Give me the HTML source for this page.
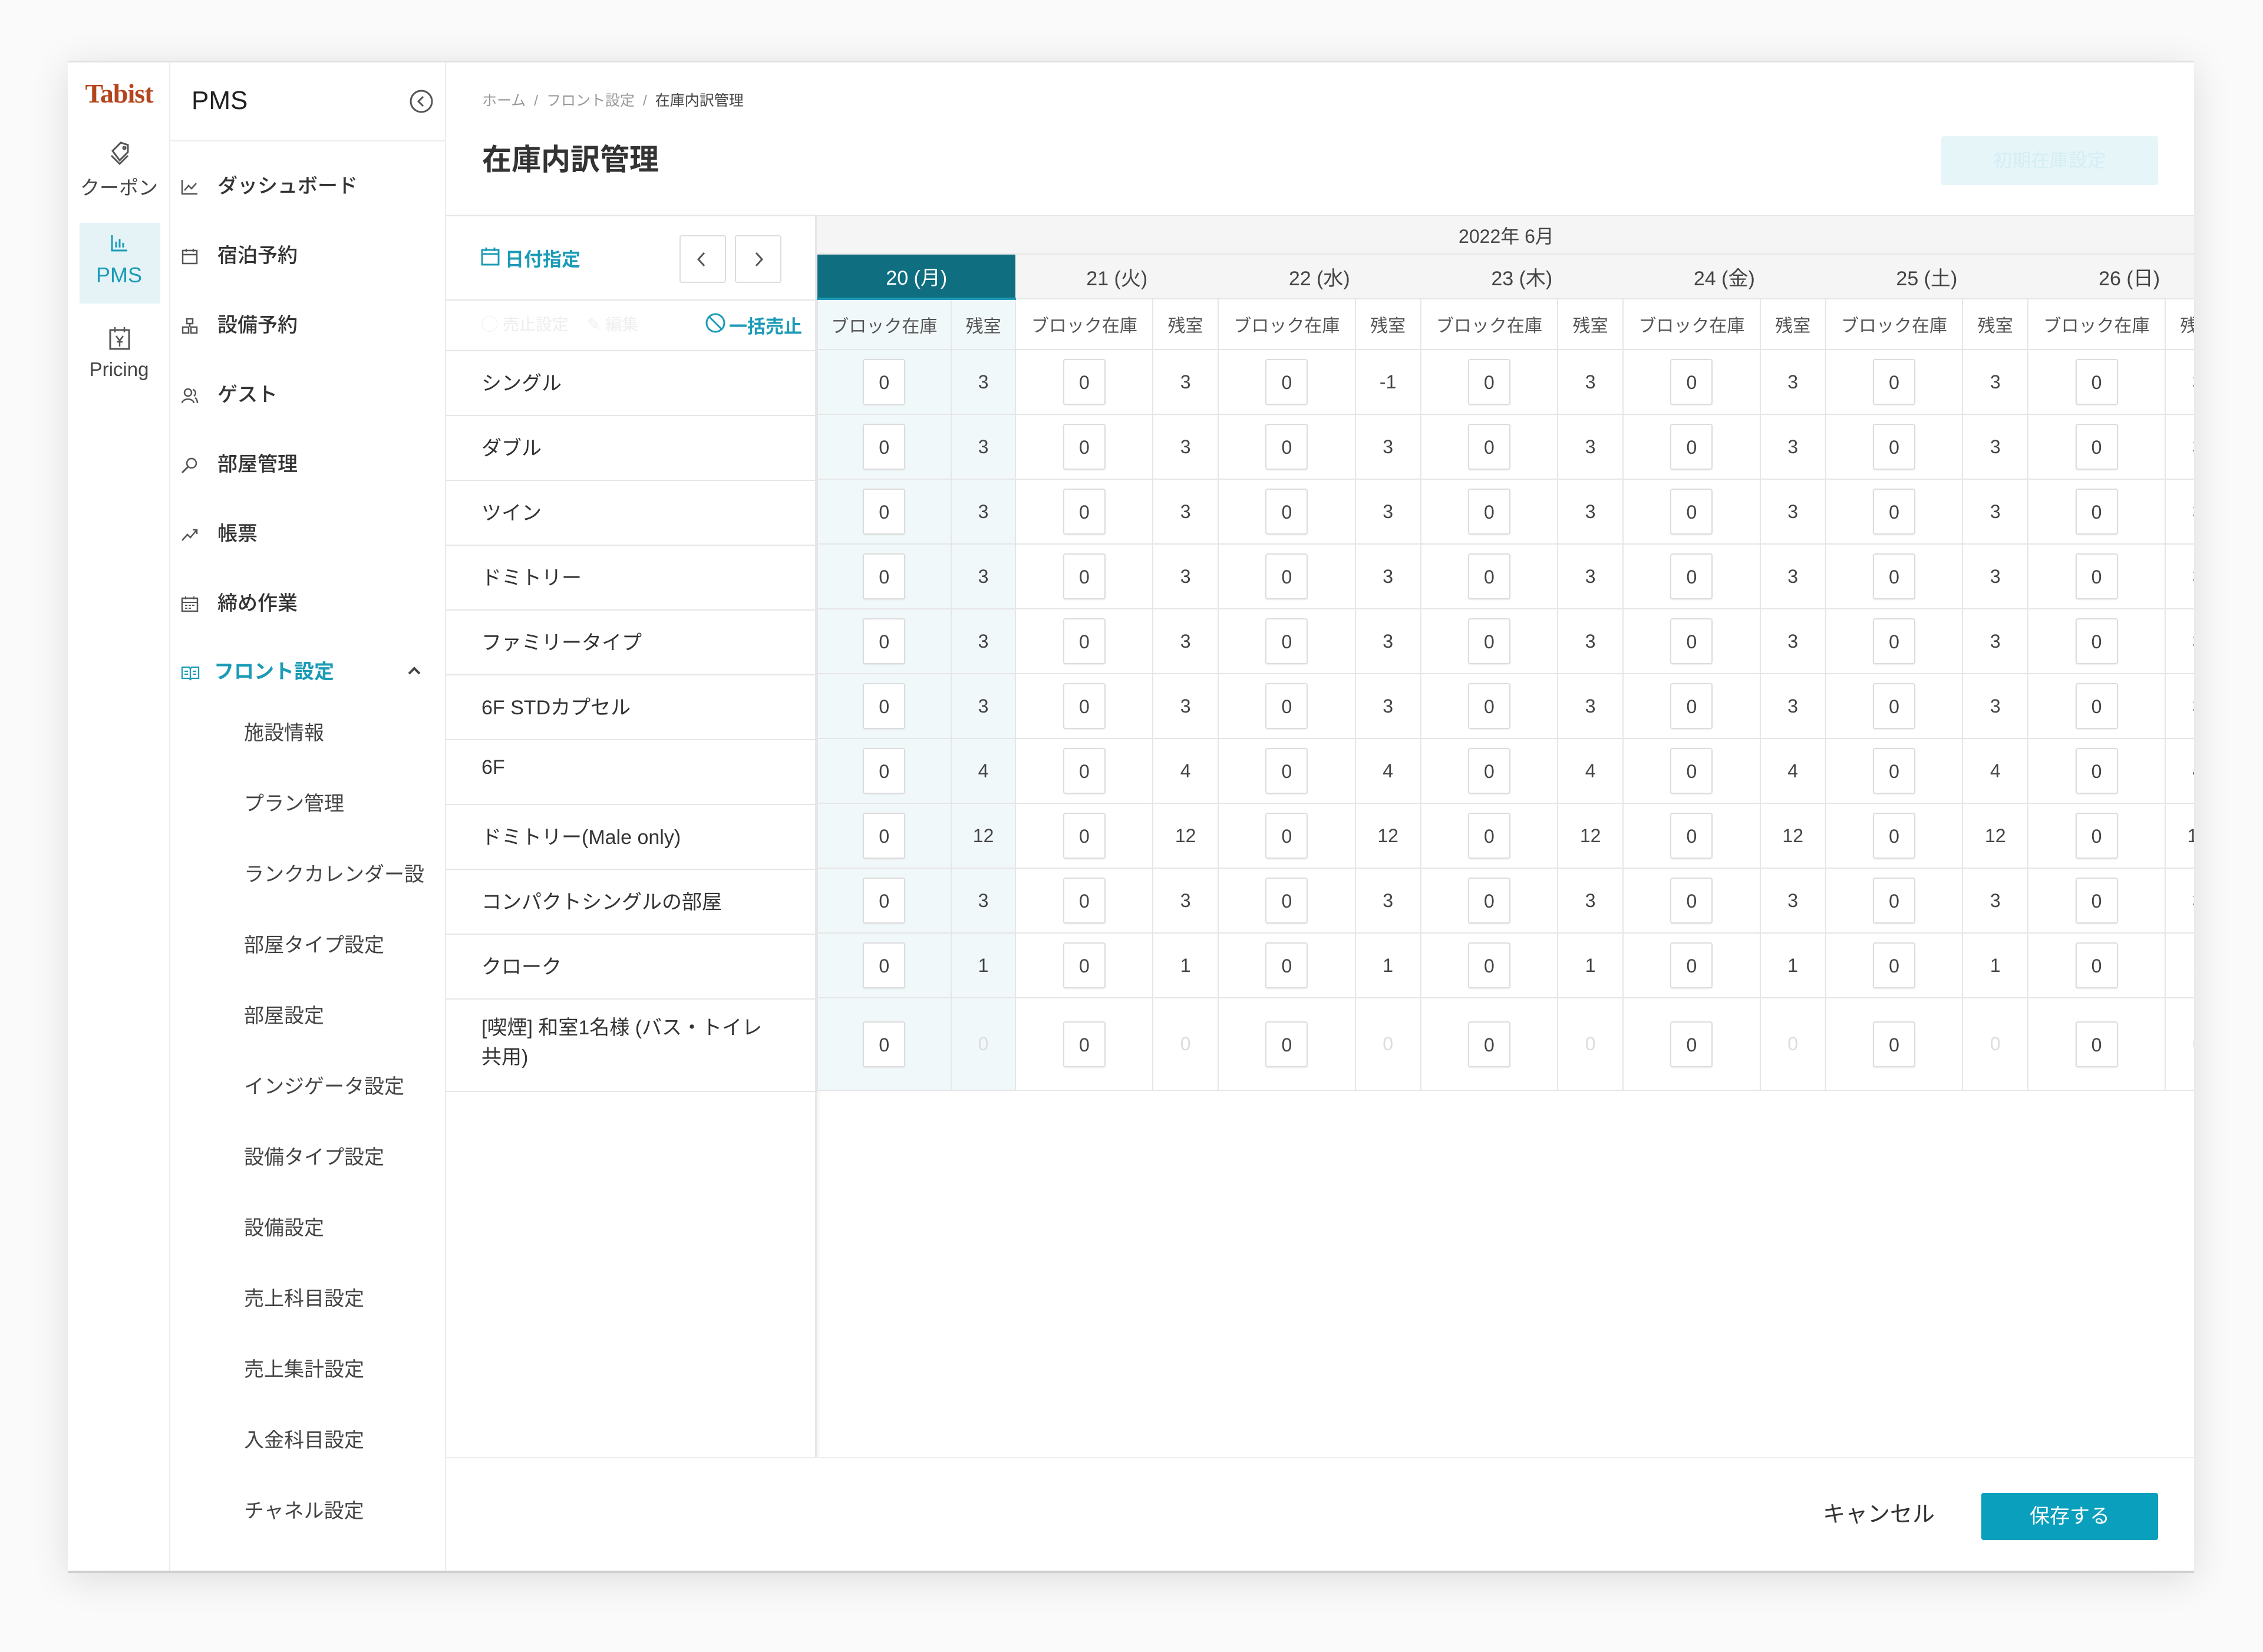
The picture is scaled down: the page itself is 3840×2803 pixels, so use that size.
<!DOCTYPE html>
<html><head><meta charset="utf-8">
<style>
*{box-sizing:border-box;margin:0;padding:0}
body{width:3840px;height:2803px;background:#fafafa;font-family:"Liberation Sans","Noto Sans CJK JP",sans-serif;color:#333;position:relative;overflow:hidden}
.card{position:absolute;left:115px;top:103px;width:3608px;height:2566px;background:#fff;box-shadow:0 10px 60px rgba(0,0,0,.12);border-top:3px solid #e2e2e2;border-bottom:4px solid #cfcfcf;overflow:hidden}
.abs{position:absolute}
.rail{left:0;top:0;width:174px;height:100%;border-right:2px solid #ececec}
.logo{position:absolute;left:0;width:174px;top:26px;text-align:center;font-family:"Liberation Serif",serif;font-weight:bold;font-size:46px;color:#b4461e;letter-spacing:-1px}
.ri{position:absolute;left:0;width:174px;text-align:center;font-size:33px;color:#444}
.nav{left:174px;top:0;width:468px;height:100%;border-right:2px solid #ececec}
.ni{position:absolute;left:18px;font-size:34px;color:#333;height:50px;line-height:50px;white-space:nowrap;font-weight:500}
.ni svg{position:absolute;left:0;top:12px}
.ni span{position:absolute;left:62px}
.si{position:absolute;left:125px;font-size:34px;color:#444;white-space:nowrap}
.teal{color:#1c9bb7}
table{border-collapse:collapse;table-layout:fixed}
td{border:2px solid #e6e6e6;text-align:center;font-size:32px;color:#444;padding:0}
.hd td{background:#f5f5f5;border-left:none;border-right:none;border-top:none}
.sub td{font-size:30px;color:#555;background:#fff;height:86px}
.h{background:#f1f8fa!important}
.inp{display:inline-block;width:72px;height:78px;line-height:76px;border:2px solid #ddd;border-radius:4px;background:#fff;font-size:32px;color:#444;box-shadow:0 1px 2px rgba(0,0,0,.08)}
.br td{height:110px}
.f{color:#ddd}
.lab{position:absolute;left:60px;font-size:34px;color:#333}
</style></head><body>
<div class="card">
 <div class="abs rail">
  <div class="logo">Tabist</div>
  <svg class="abs" style="left:68px;top:130px" width="40" height="50" viewBox="0 0 40 50"><path d="M8 20 L22 6 L34 10 L34 22 L20 36 Z M28 13 a2 2 0 1 0 .1 0 M6 28 L20 42 L34 28" fill="none" stroke="#555" stroke-width="3"/></svg>
  <div class="ri" style="top:186px">クーポン</div>
  <div class="abs" style="left:20px;top:272px;width:137px;height:137px;background:#e5f3f7"></div>
  <svg class="abs" style="left:72px;top:290px" width="32" height="32" viewBox="0 0 32 32"><path d="M3 3V29H29M10 24V14M16 24V10M22 24V16" fill="none" stroke="#1c9bb7" stroke-width="3"/></svg>
  <div class="ri teal" style="top:340px;font-size:36px">PMS</div>
  <svg class="abs" style="left:68px;top:446px" width="40" height="44" viewBox="0 0 40 44"><rect x="4" y="8" width="32" height="32" fill="none" stroke="#555" stroke-width="3"/><path d="M12 3V12M28 3V12M14 18L20 26L26 18M20 26V36M15 28H25" fill="none" stroke="#555" stroke-width="2.5"/></svg>
  <div class="ri" style="top:502px">Pricing</div>
 </div>
 <div class="abs nav">
  <div class="abs" style="left:36px;top:40px;font-size:44px;color:#222">PMS</div>
  <svg class="abs" style="left:404px;top:44px" width="44" height="44" viewBox="0 0 44 44"><circle cx="22" cy="22" r="18" fill="none" stroke="#555" stroke-width="3"/><path d="M25 14L17 22L25 30" fill="none" stroke="#555" stroke-width="3"/></svg>
  <div class="abs" style="left:0;top:132px;width:468px;border-top:2px solid #ececec"></div>
  <div class="ni" style="top:185px"><svg width="30" height="28"><path d="M2 2V26H28M6 20L13 12L18 17L26 8" fill="none" stroke="#555" stroke-width="2.5"/></svg><span>ダッシュボード</span></div>
  <div class="ni" style="top:303px"><svg width="30" height="28"><rect x="3" y="4" width="24" height="22" fill="none" stroke="#555" stroke-width="2.5"/><path d="M3 11H27M9 1V6M21 1V6" stroke="#555" stroke-width="2.5"/></svg><span>宿泊予約</span></div>
  <div class="ni" style="top:421px"><svg width="30" height="28"><path d="M10 2H20V10H10Z M3 16H13V26H3Z M17 16H27V26H17Z M15 10V16" fill="none" stroke="#555" stroke-width="2.5"/></svg><span>設備予約</span></div>
  <div class="ni" style="top:539px"><svg width="30" height="28"><circle cx="12" cy="9" r="6" fill="none" stroke="#555" stroke-width="2.5"/><path d="M2 27C3 18 21 18 22 27M20 4A6 6 0 0 1 22 15M24 18C27 20 28 23 28 27" fill="none" stroke="#555" stroke-width="2.5"/></svg><span>ゲスト</span></div>
  <div class="ni" style="top:657px"><svg width="30" height="28"><circle cx="18" cy="11" r="8" fill="none" stroke="#555" stroke-width="2.5"/><path d="M12 17L2 27" stroke="#555" stroke-width="3"/></svg><span>部屋管理</span></div>
  <div class="ni" style="top:775px"><svg width="30" height="28"><path d="M2 24L11 14L16 19L27 6M20 6H27V13" fill="none" stroke="#555" stroke-width="2.5"/></svg><span>帳票</span></div>
  <div class="ni" style="top:893px"><svg width="30" height="28"><rect x="2" y="4" width="26" height="22" fill="none" stroke="#555" stroke-width="2.5"/><path d="M2 11H28M8 1V6M22 1V6M7 16H11M13 16H17M19 16H23M7 21H11M13 21H17" stroke="#555" stroke-width="2"/></svg><span>締め作業</span></div>
  <div class="ni teal" style="top:1009px;color:#1c9bb7;font-weight:bold"><svg width="32" height="28"><path d="M2 5H14L16 8L18 5H30V24H18L16 26L14 24H2Z M16 8V24 M6 12H12M6 17H12M20 12H26M20 17H26" fill="none" stroke="#1c9bb7" stroke-width="2.3"/></svg><span style="left:56px">フロント設定</span></div>
  <svg class="abs" style="left:402px;top:1024px" width="24" height="16"><path d="M3 13L12 4L21 13" fill="none" stroke="#444" stroke-width="4"/></svg>
  <div class="si" style="top:1110px">施設情報</div>
  <div class="si" style="top:1230px">プラン管理</div>
  <div class="si" style="top:1350px">ランクカレンダー設</div>
  <div class="si" style="top:1470px">部屋タイプ設定</div>
  <div class="si" style="top:1590px">部屋設定</div>
  <div class="si" style="top:1710px">インジゲータ設定</div>
  <div class="si" style="top:1830px">設備タイプ設定</div>
  <div class="si" style="top:1950px">設備設定</div>
  <div class="si" style="top:2070px">売上科目設定</div>
  <div class="si" style="top:2190px">売上集計設定</div>
  <div class="si" style="top:2310px">入金科目設定</div>
  <div class="si" style="top:2430px">チャネル設定</div>
 </div>
 <!-- main -->
 <div class="abs" style="left:703px;top:45px;font-size:25px;color:#999;white-space:nowrap">ホーム &nbsp;/&nbsp; フロント設定 &nbsp;/&nbsp; <span style="color:#444">在庫内訳管理</span></div>
 <div class="abs" style="left:703px;top:125px;font-size:50px;color:#333;font-weight:bold">在庫内訳管理</div>
 <div class="abs" style="left:3179px;top:125px;width:368px;height:83px;background:#e6f5f8;color:#d4eef4;font-size:32px;text-align:center;line-height:83px;border-radius:4px">初期在庫設定</div>
 <!-- left panel -->
 <div class="abs" style="left:642px;top:259px;width:629px;height:2107px;border-top:2px solid #e6e6e6;border-right:3px solid #e6e6e6;box-shadow:4px 0 8px rgba(0,0,0,.05);background:#fff">
  <svg class="abs" style="left:59px;top:52px" width="32" height="32"><rect x="2" y="5" width="28" height="25" fill="none" stroke="#1c9bb7" stroke-width="3"/><path d="M2 12H30M9 1V7M23 1V7" stroke="#1c9bb7" stroke-width="3"/></svg>
  <div class="abs teal" style="left:100px;top:48px;font-size:32px;font-weight:bold">日付指定</div>
  <div class="abs" style="left:396px;top:32px;width:79px;height:81px;border:2px solid #ddd;border-radius:4px"></div>
  <svg class="abs" style="left:422px;top:59px" width="24" height="28"><path d="M16 3L6 14L16 25" fill="none" stroke="#555" stroke-width="3"/></svg>
  <div class="abs" style="left:490px;top:32px;width:79px;height:81px;border:2px solid #ddd;border-radius:4px"></div>
  <svg class="abs" style="left:520px;top:59px" width="24" height="28"><path d="M6 3L16 14L6 25" fill="none" stroke="#555" stroke-width="3"/></svg>
  <div class="abs" style="left:0;top:141px;width:626px;border-top:2px solid #e6e6e6"></div>
  <div class="abs" style="left:60px;top:162px;font-size:28px;color:#eee">◯ 売止設定 &nbsp;&nbsp; ✎ 編集</div>
  <svg class="abs" style="left:438px;top:162px" width="38" height="38"><circle cx="19" cy="19" r="15" fill="none" stroke="#1c9bb7" stroke-width="3"/><path d="M9 9L29 29" stroke="#1c9bb7" stroke-width="3"/></svg>
  <div class="abs teal" style="left:480px;top:162px;font-size:31px;font-weight:bold">一括売止</div>
  <div class="abs" style="left:0;top:227px;width:626px;border-top:2px solid #e6e6e6"></div>
  <div class="lab" style="top:256px">シングル</div>
  <div class="abs" style="left:0;top:337px;width:626px;border-top:2px solid #e6e6e6"></div>
  <div class="lab" style="top:366px">ダブル</div>
  <div class="abs" style="left:0;top:447px;width:626px;border-top:2px solid #e6e6e6"></div>
  <div class="lab" style="top:476px">ツイン</div>
  <div class="abs" style="left:0;top:557px;width:626px;border-top:2px solid #e6e6e6"></div>
  <div class="lab" style="top:586px">ドミトリー</div>
  <div class="abs" style="left:0;top:667px;width:626px;border-top:2px solid #e6e6e6"></div>
  <div class="lab" style="top:696px">ファミリータイプ</div>
  <div class="abs" style="left:0;top:777px;width:626px;border-top:2px solid #e6e6e6"></div>
  <div class="lab" style="top:806px">6F STDカプセル</div>
  <div class="abs" style="left:0;top:887px;width:626px;border-top:2px solid #e6e6e6"></div>
  <div class="lab" style="top:916px">6F</div>
  <div class="abs" style="left:0;top:997px;width:626px;border-top:2px solid #e6e6e6"></div>
  <div class="lab" style="top:1026px">ドミトリー(Male only)</div>
  <div class="abs" style="left:0;top:1107px;width:626px;border-top:2px solid #e6e6e6"></div>
  <div class="lab" style="top:1136px">コンパクトシングルの部屋</div>
  <div class="abs" style="left:0;top:1217px;width:626px;border-top:2px solid #e6e6e6"></div>
  <div class="lab" style="top:1246px">クローク</div>
  <div class="abs" style="left:0;top:1327px;width:626px;border-top:2px solid #e6e6e6"></div>
  <div class="lab" style="top:1352px;line-height:50px">[喫煙] 和室1名様 (バス・トイレ<br>共用)</div>
  <div class="abs" style="left:0;top:1484px;width:626px;border-top:2px solid #e6e6e6"></div>
 </div>
 <!-- grid -->
 <div class="abs" style="left:1271px;top:259px;width:2337px;height:1600px;overflow:hidden">
 <table style="width:2400px">
  <colgroup><col style="width:225px"><col style="width:109px"><col style="width:231px"><col style="width:110px"><col style="width:231px"><col style="width:110px"><col style="width:231px"><col style="width:110px"><col style="width:231px"><col style="width:110px"><col style="width:231px"><col style="width:110px"><col style="width:231px"><col style="width:110px"></colgroup>
  <tr class="hd"><td colspan="14" style="height:65px;font-size:32px;padding-top:0;border-top:2px solid #e6e6e6;text-indent:-60px">2022年 6月</td></tr>
  <tr class="hd"><td colspan="2" style="height:76px;background:#0f6f80;color:#fff;font-size:34px;border-bottom:4px solid #1c9bb7">20 (月)</td><td colspan="2" style="font-size:34px">21 (火)</td><td colspan="2" style="font-size:34px">22 (水)</td><td colspan="2" style="font-size:34px">23 (木)</td><td colspan="2" style="font-size:34px">24 (金)</td><td colspan="2" style="font-size:34px">25 (土)</td><td colspan="2" style="font-size:34px">26 (日)</td></tr>
  <tr class="sub"><td class="h">ブロック在庫</td><td class="h">残室</td><td>ブロック在庫</td><td>残室</td><td>ブロック在庫</td><td>残室</td><td>ブロック在庫</td><td>残室</td><td>ブロック在庫</td><td>残室</td><td>ブロック在庫</td><td>残室</td><td>ブロック在庫</td><td>残室</td></tr>
  <tr class="br"><td class="h"><span class="inp">0</span></td><td class="h">3</td><td><span class="inp">0</span></td><td>3</td><td><span class="inp">0</span></td><td>-1</td><td><span class="inp">0</span></td><td>3</td><td><span class="inp">0</span></td><td>3</td><td><span class="inp">0</span></td><td>3</td><td><span class="inp">0</span></td><td>3</td></tr>
  <tr class="br"><td class="h"><span class="inp">0</span></td><td class="h">3</td><td><span class="inp">0</span></td><td>3</td><td><span class="inp">0</span></td><td>3</td><td><span class="inp">0</span></td><td>3</td><td><span class="inp">0</span></td><td>3</td><td><span class="inp">0</span></td><td>3</td><td><span class="inp">0</span></td><td>3</td></tr>
  <tr class="br"><td class="h"><span class="inp">0</span></td><td class="h">3</td><td><span class="inp">0</span></td><td>3</td><td><span class="inp">0</span></td><td>3</td><td><span class="inp">0</span></td><td>3</td><td><span class="inp">0</span></td><td>3</td><td><span class="inp">0</span></td><td>3</td><td><span class="inp">0</span></td><td>3</td></tr>
  <tr class="br"><td class="h"><span class="inp">0</span></td><td class="h">3</td><td><span class="inp">0</span></td><td>3</td><td><span class="inp">0</span></td><td>3</td><td><span class="inp">0</span></td><td>3</td><td><span class="inp">0</span></td><td>3</td><td><span class="inp">0</span></td><td>3</td><td><span class="inp">0</span></td><td>3</td></tr>
  <tr class="br"><td class="h"><span class="inp">0</span></td><td class="h">3</td><td><span class="inp">0</span></td><td>3</td><td><span class="inp">0</span></td><td>3</td><td><span class="inp">0</span></td><td>3</td><td><span class="inp">0</span></td><td>3</td><td><span class="inp">0</span></td><td>3</td><td><span class="inp">0</span></td><td>3</td></tr>
  <tr class="br"><td class="h"><span class="inp">0</span></td><td class="h">3</td><td><span class="inp">0</span></td><td>3</td><td><span class="inp">0</span></td><td>3</td><td><span class="inp">0</span></td><td>3</td><td><span class="inp">0</span></td><td>3</td><td><span class="inp">0</span></td><td>3</td><td><span class="inp">0</span></td><td>3</td></tr>
  <tr class="br"><td class="h"><span class="inp">0</span></td><td class="h">4</td><td><span class="inp">0</span></td><td>4</td><td><span class="inp">0</span></td><td>4</td><td><span class="inp">0</span></td><td>4</td><td><span class="inp">0</span></td><td>4</td><td><span class="inp">0</span></td><td>4</td><td><span class="inp">0</span></td><td>4</td></tr>
  <tr class="br"><td class="h"><span class="inp">0</span></td><td class="h">12</td><td><span class="inp">0</span></td><td>12</td><td><span class="inp">0</span></td><td>12</td><td><span class="inp">0</span></td><td>12</td><td><span class="inp">0</span></td><td>12</td><td><span class="inp">0</span></td><td>12</td><td><span class="inp">0</span></td><td>12</td></tr>
  <tr class="br"><td class="h"><span class="inp">0</span></td><td class="h">3</td><td><span class="inp">0</span></td><td>3</td><td><span class="inp">0</span></td><td>3</td><td><span class="inp">0</span></td><td>3</td><td><span class="inp">0</span></td><td>3</td><td><span class="inp">0</span></td><td>3</td><td><span class="inp">0</span></td><td>3</td></tr>
  <tr class="br"><td class="h"><span class="inp">0</span></td><td class="h">1</td><td><span class="inp">0</span></td><td>1</td><td><span class="inp">0</span></td><td>1</td><td><span class="inp">0</span></td><td>1</td><td><span class="inp">0</span></td><td>1</td><td><span class="inp">0</span></td><td>1</td><td><span class="inp">0</span></td><td>1</td></tr>
  <tr class="br"><td class="h" style="height:157px"><span class="inp">0</span></td><td class="h f">0</td><td><span class="inp">0</span></td><td class="f">0</td><td><span class="inp">0</span></td><td class="f">0</td><td><span class="inp">0</span></td><td class="f">0</td><td><span class="inp">0</span></td><td class="f">0</td><td><span class="inp">0</span></td><td class="f">0</td><td><span class="inp">0</span></td><td class="f">0</td></tr>
 </table>
 </div>
 <!-- footer -->
 <div class="abs" style="left:642px;top:2366px;width:2966px;border-top:2px solid #eee"></div>
 <div class="abs" style="left:2978px;top:2432px;font-size:38px;color:#333">キャンセル</div>
 <div class="abs" style="left:3247px;top:2427px;width:300px;height:80px;background:#0aa0bd;border-radius:4px;color:#fff;font-size:34px;text-align:center;line-height:80px">保存する</div>
</div>
</body></html>
